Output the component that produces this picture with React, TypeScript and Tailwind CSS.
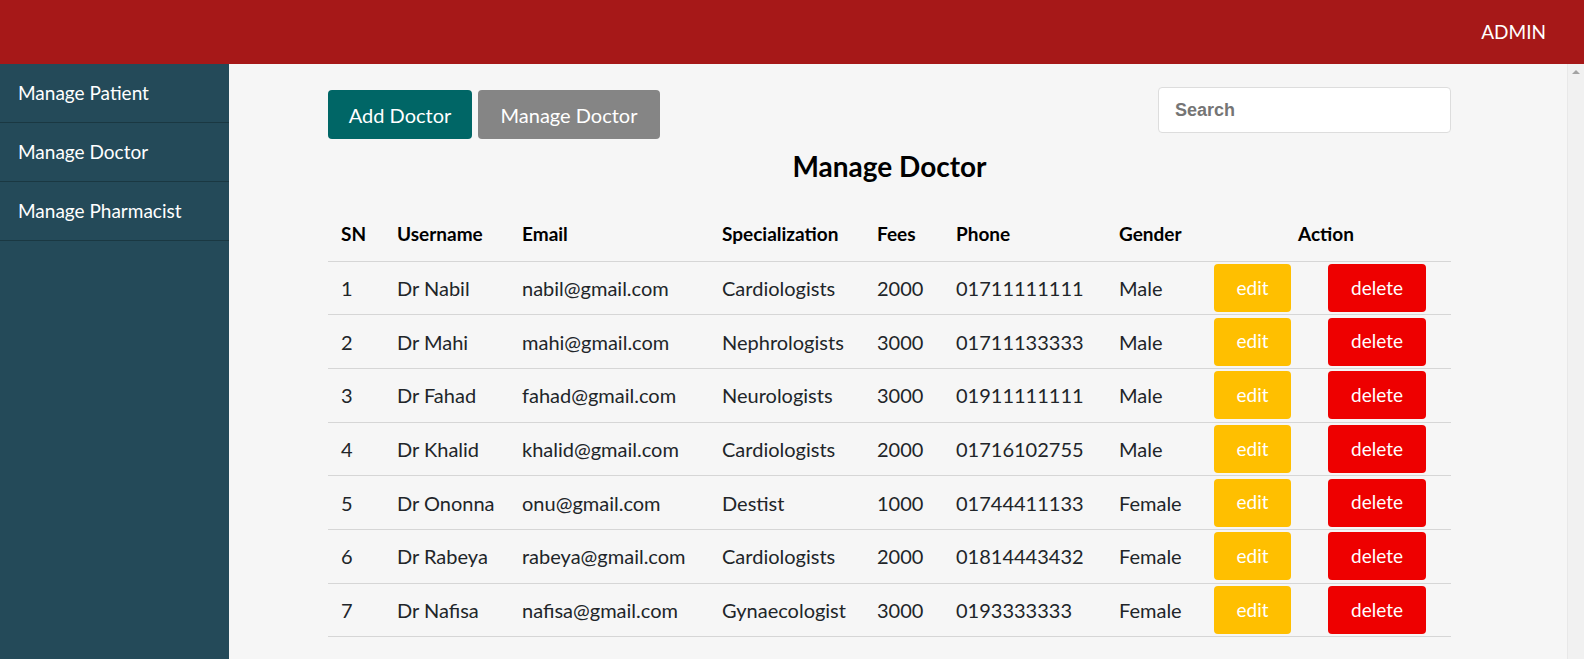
import React from 'react'

interface Doctor {
  sn: number
  username: string
  email: string
  specialization: string
  fees: number
  phone: string
  gender: string
}

const doctors: Doctor[] = [
  { sn: 1, username: 'Dr Nabil', email: 'nabil@gmail.com', specialization: 'Cardiologists', fees: 2000, phone: '01711111111', gender: 'Male' },
  { sn: 2, username: 'Dr Mahi', email: 'mahi@gmail.com', specialization: 'Nephrologists', fees: 3000, phone: '01711133333', gender: 'Male' },
  { sn: 3, username: 'Dr Fahad', email: 'fahad@gmail.com', specialization: 'Neurologists', fees: 3000, phone: '01911111111', gender: 'Male' },
  { sn: 4, username: 'Dr Khalid', email: 'khalid@gmail.com', specialization: 'Cardiologists', fees: 2000, phone: '01716102755', gender: 'Male' },
  { sn: 5, username: 'Dr Ononna', email: 'onu@gmail.com', specialization: 'Destist', fees: 1000, phone: '01744411133', gender: 'Female' },
  { sn: 6, username: 'Dr Rabeya', email: 'rabeya@gmail.com', specialization: 'Cardiologists', fees: 2000, phone: '01814443432', gender: 'Female' },
  { sn: 7, username: 'Dr Nafisa', email: 'nafisa@gmail.com', specialization: 'Gynaecologist', fees: 3000, phone: '0193333333', gender: 'Female' },
]

const menu = ['Manage Patient', 'Manage Doctor', 'Manage Pharmacist']

const App = () => {
  return (
    <div className="h-[659px] flex flex-col overflow-hidden font-['Lato',sans-serif]">
      <header className="h-16 shrink-0 bg-[#a61818] flex items-center justify-end pr-[38px]">
        <span className="text-white text-[19px]">ADMIN</span>
      </header>
      <div className="flex flex-1 min-h-0">
        <aside className="w-[229px] shrink-0 bg-[#244a59]">
          {menu.map((item) => (
            <div key={item} className="h-[59px] flex items-center px-[18px] border-b border-[#1a3842] text-white text-[19px]">
              {item}
            </div>
          ))}
        </aside>
        <main className="flex-1 bg-[#f6f6f6] overflow-hidden">
          <div className="ml-[99px] w-[1123px] pt-[23px]">
            <div className="flex justify-between items-start">
              <div className="flex gap-[6px] mt-[3px]">
                <button className="h-[49px] w-[144px] rounded bg-[#006666] text-white text-[20px]">Add Doctor</button>
                <button className="h-[49px] w-[182px] rounded bg-[#858585] text-white text-[20px]">Manage Doctor</button>
              </div>
              <input
                placeholder="Search"
                className="w-[293px] h-[46px] bg-white border border-[#dddddd] rounded px-4 text-[18px] font-bold font-['Liberation_Sans',sans-serif] placeholder:text-[#757575] outline-none"
              />
            </div>
            <h2 className="mt-[12px] text-center text-[28px] leading-[30px] font-bold text-black">Manage Doctor</h2>
            <table className="mt-[26px] w-full table-fixed border-collapse text-[20px] text-[#212529]">
              <colgroup>
                <col className="w-[56px]" />
                <col className="w-[125px]" />
                <col className="w-[200px]" />
                <col className="w-[155px]" />
                <col className="w-[79px]" />
                <col className="w-[163px]" />
                <col className="w-[95px]" />
                <col className="w-[114px]" />
                <col className="w-[136px]" />
              </colgroup>
              <thead>
                <tr className="h-[54px] border-b border-[#d6d6d6] text-black text-[19px]">
                  <th className="text-left font-bold px-[13px]">SN</th>
                  <th className="text-left font-bold px-[13px]">Username</th>
                  <th className="text-left font-bold px-[13px]">Email</th>
                  <th className="text-left font-bold px-[13px]">Specialization</th>
                  <th className="text-left font-bold px-[13px]">Fees</th>
                  <th className="text-left font-bold px-[13px]">Phone</th>
                  <th className="text-left font-bold px-[13px]">Gender</th>
                  <th colSpan={2} className="text-center font-bold">Action</th>
                </tr>
              </thead>
              <tbody>
                {doctors.map((d) => (
                  <tr key={d.sn} className="h-[53.7px] border-b border-[#d6d6d6]">
                    <td className="px-[13px]">{d.sn}</td>
                    <td className="px-[13px]">{d.username}</td>
                    <td className="px-[13px]">{d.email}</td>
                    <td className="px-[13px]">{d.specialization}</td>
                    <td className="px-[13px]">{d.fees}</td>
                    <td className="px-[13px]">{d.phone}</td>
                    <td className="px-[13px]">{d.gender}</td>
                    <td className="px-[13px] py-[2px]">
                      <button className="w-[77px] h-[48px] rounded bg-[#ffbf00] text-white text-[19px]">edit</button>
                    </td>
                    <td className="px-[13px] py-[2px]">
                      <button className="w-[98px] h-[48px] rounded bg-[#ee0000] text-white text-[19px]">delete</button>
                    </td>
                  </tr>
                ))}
              </tbody>
            </table>
          </div>
        </main>
        {/* scrollbar track */}
        <div className="w-[17px] shrink-0 bg-[#f1f1f1] border-l border-[#e8e8e8] flex justify-center pt-[6px]">
          <div className="w-0 h-0 border-l-[4px] border-r-[4px] border-b-[4px] border-l-transparent border-r-transparent border-b-[#a3a3a3]" />
        </div>
      </div>
    </div>
  )
}

export default App
